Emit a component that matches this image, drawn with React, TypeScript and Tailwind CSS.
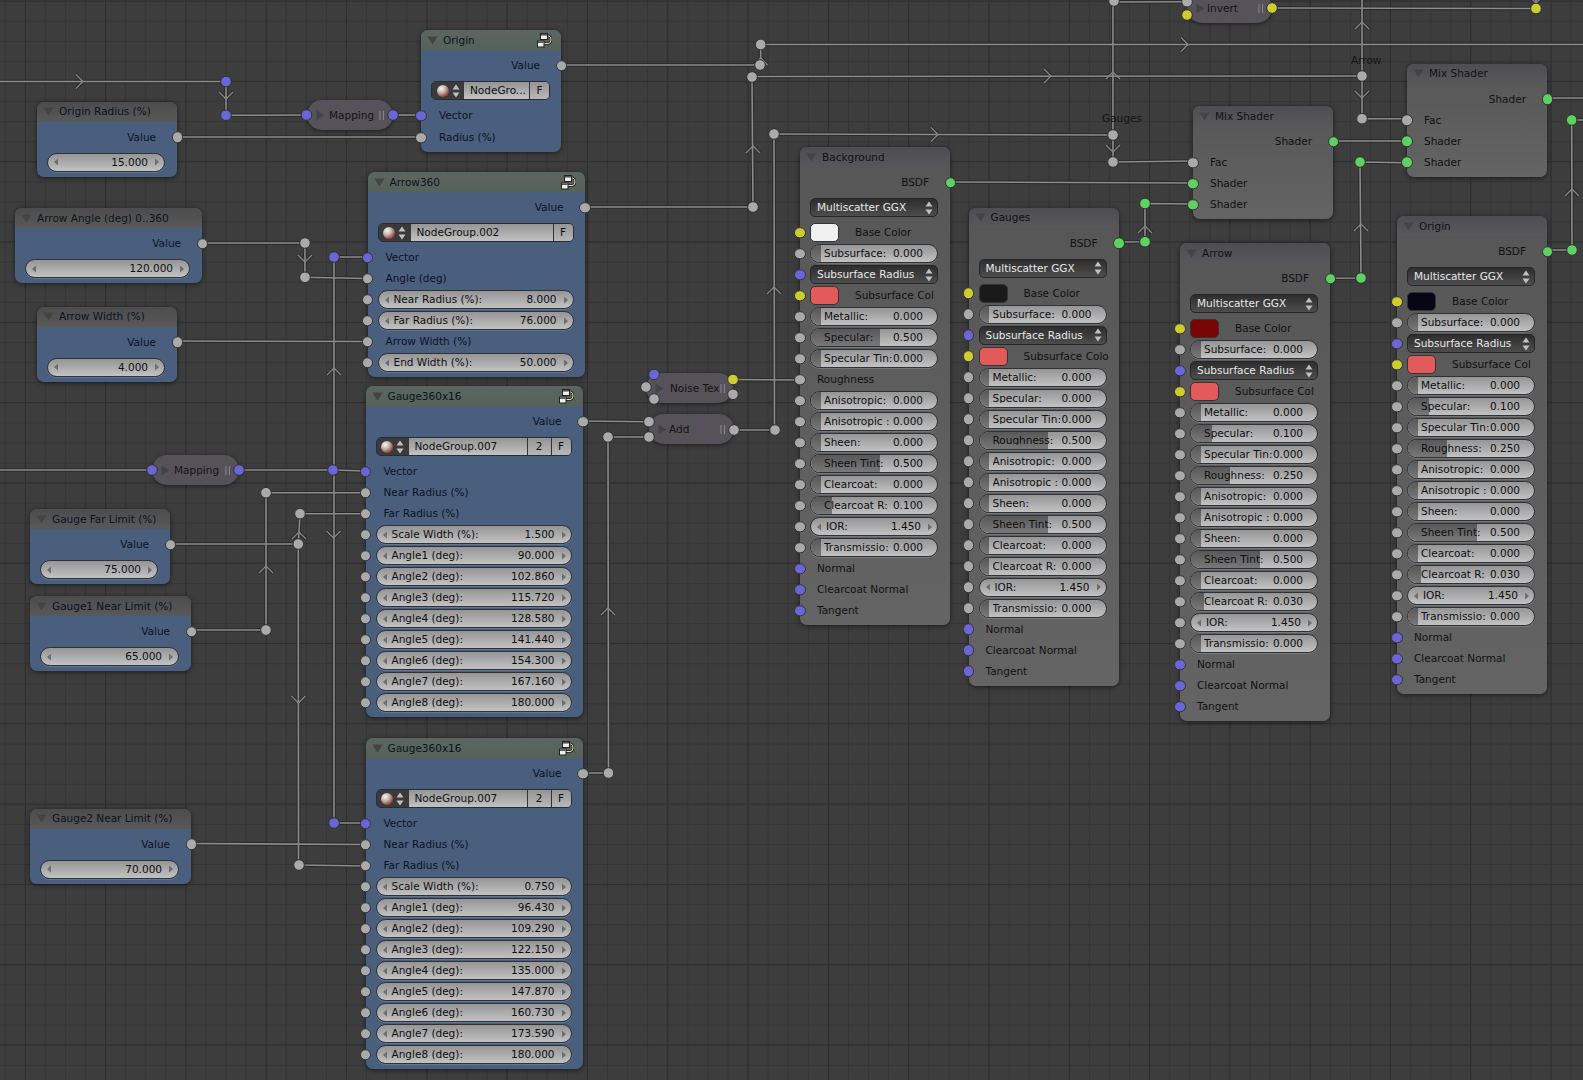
import React from "react";

type Sock = "grey" | "blue" | "yellow" | "green";
const sockClass: Record<Sock, string> = {
  grey: "bg-[#aaaaaa]",
  blue: "bg-[#6a66d8]",
  yellow: "bg-[#cfcc2e]",
  green: "bg-[#5fd062]",
};
const sockFill: Record<Sock, string> = { grey: "#aaaaaa", blue: "#6a66d8", yellow: "#cfcc2e", green: "#5fd062" };

function Socket({ c, side }: { c: Sock; side: "l" | "r" }) {
  return (
    <span
      className={`absolute top-1/2 -translate-y-1/2 size-[11.5px] rounded-full border border-[#333] ${sockClass[c]} ${
        side === "l" ? "left-[-6px]" : "right-[-6px]"
      }`}
    />
  );
}

function Arrow({ dir }: { dir: "l" | "r" }) {
  return (
    <svg width="6" height="8" viewBox="0 0 6 8" className="shrink-0">
      <path d={dir === "l" ? "M5 0.5 L1 4 L5 7.5Z" : "M1 0.5 L5 4 L1 7.5Z"} fill="#6e6e6e" />
    </svg>
  );
}

function UpDown() {
  return (
    <svg width="8" height="14" viewBox="0 0 8 14" className="shrink-0">
      <path d="M4 0.5 L7.5 5.5 L0.5 5.5Z M4 13.5 L7.5 8.5 L0.5 8.5Z" fill="#c0c0c0" />
    </svg>
  );
}

function InRow({ label, c, indent = "pl-[17px]" }: { label: string; c: Sock; indent?: string }) {
  return (
    <div className={`relative h-[21px] flex items-center ${indent}`}>
      <Socket c={c} side="l" />
      <span>{label}</span>
    </div>
  );
}

function OutRow({ label, c }: { label: string; c: Sock }) {
  return (
    <div className="relative h-[21px] mt-[5px] flex items-center justify-end pr-[21px]">
      <span>{label}</span>
      <Socket c={c} side="r" />
    </div>
  );
}

const fieldBase =
  "relative h-[19px] w-full rounded-full border border-[#2d3138] overflow-hidden flex items-center text-[#0e0e0e] bg-gradient-to-b from-[#959595] to-[#c2c2c2] shadow-[0_1px_0_rgba(255,255,255,0.15)]";

function Slider({ label, v, c = "grey" }: { label: string; v: number; c?: Sock }) {
  return (
    <div className="relative h-[21px] flex items-center pl-[10px] pr-[12px]">
      <Socket c={c} side="l" />
      <div className={fieldBase}>
        <div
          className="absolute left-0 top-0 bottom-0 bg-gradient-to-b from-[#585858] to-[#787878]"
          style={{ width: `${9.5 + v * 118}px` }}
        />
        <span className="relative ml-[13px] min-w-0 overflow-hidden whitespace-nowrap flex-1">{label}</span>
        <span className="relative mr-[14px] shrink-0">{v.toFixed(3)}</span>
      </div>
    </div>
  );
}

function NumField({
  label,
  v,
  pad = "pl-[10px] pr-[12px]",
  socket = true,
}: {
  label?: string;
  v: string;
  pad?: string;
  socket?: boolean;
}) {
  return (
    <div className={`relative h-[21px] flex items-center ${pad}`}>
      {socket && <Socket c="grey" side="l" />}
      <div className={fieldBase}>
        <span className="ml-[5px]">
          <Arrow dir="l" />
        </span>
        <span className="ml-[4px] flex-1 whitespace-nowrap">{label}</span>
        <span className="mr-[6px]">{v}</span>
        <span className="mr-[4px]">
          <Arrow dir="r" />
        </span>
      </div>
    </div>
  );
}

function Dropdown({ label, c }: { label: string; c?: Sock }) {
  return (
    <div className="relative h-[21px] flex items-center pl-[10px] pr-[12px]">
      {c && <Socket c={c} side="l" />}
      <div className="h-[19px] w-full rounded-[5px] border border-[#262626] bg-gradient-to-b from-[#2e2e2e] to-[#4d4d4d] flex items-center justify-between pl-[6px] pr-[4px] text-[#e8e8e8] whitespace-nowrap">
        <span>{label}</span>
        <UpDown />
      </div>
    </div>
  );
}

function Swatch({ color, label }: { color: string; label: string }) {
  return (
    <div className="relative h-[21px] flex items-center pl-[10px]">
      <Socket c="yellow" side="l" />
      <span className={`h-[19px] w-[29px] rounded-[5px] border border-[#333] ${color}`} />
      <span className="ml-[16px] whitespace-nowrap">{label}</span>
    </div>
  );
}

function Header({ name, tone, icon }: { name: string; tone: string; icon?: boolean }) {
  return (
    <div className={`h-[20px] flex items-center pl-[6px] pr-[9px] bg-gradient-to-b ${tone}`}>
      <svg width="11" height="9" viewBox="0 0 11 9" className="shrink-0">
        <path d="M0.5 0.5 H10.5 L5.5 8.5Z" fill="#444444" />
      </svg>
      <span className="ml-[5px] flex-1 whitespace-nowrap">{name}</span>
      {icon && <GroupIcon />}
    </div>
  );
}

function GroupIcon() {
  return (
    <svg width="15" height="15" viewBox="0 0 15 15" className="shrink-0">
      <path d="M10 3 H12 Q14 3.5 14 7 Q14 10.5 11 10.5 H6" fill="none" stroke="#222" strokeWidth="2.4" />
      <path d="M10 3 H12 Q14 3.5 14 7 Q14 10.5 11 10.5 H6" fill="none" stroke="#e6e2b8" strokeWidth="1" />
      <rect x="3.5" y="0.5" width="7" height="6" fill="#eee" stroke="#222" />
      <rect x="4" y="1" width="6" height="1.6" fill="#555" />
      <rect x="0.5" y="8" width="6.5" height="6" fill="#eee" stroke="#222" />
      <rect x="1" y="8.5" width="5.5" height="1.5" fill="#555" />
    </svg>
  );
}

const nodeBase = "absolute rounded-[7px] overflow-visible flex flex-col shadow-[0_1px_5px_rgba(0,0,0,0.55)]";
const blueBody = "bg-[#4a5f7e] text-[#0a1322]";
const greyBody = "bg-gradient-to-b from-[#565656] to-[#646464] text-[#111111]";
const headGroup = "from-[#5a6660] to-[#566258] rounded-t-[7px]";
const headVal = "from-[#4c4c4c] to-[#595959] rounded-t-[7px]";
const headShader = "from-[#4e4e52] to-[#58585b] rounded-t-[7px]";

function ValueNode({ pos, name, v }: { pos: string; name: string; v: string }) {
  return (
    <div className={`${nodeBase} ${blueBody} ${pos} pb-[4px]`}>
      <Header name={name} tone={headVal} />
      <OutRow label="Value" c="grey" />
      <div className="mt-[4px]">
        <NumField v={v} socket={false} />
      </div>
    </div>
  );
}

function IdBlock({ name, user }: { name: string; user?: string }) {
  return (
    <div className="relative h-[21px] mt-[4px] mb-[4px] flex items-center pl-[10px] pr-[11px]">
      <div className="h-[19px] w-full rounded-[5px] border border-[#262c36] flex items-stretch overflow-hidden text-[#0e0e0e]">
        <div className="w-[32px] shrink-0 bg-[#3a3a3a] flex items-center justify-center gap-[3px]">
          <span className="size-[12px] rounded-full bg-[radial-gradient(circle_at_35%_30%,#f4f4f4_0%,#c8b8b0_35%,#9a4c44_70%,#4a2a28_100%)]" />
          <UpDown />
        </div>
        <div className="flex-1 min-w-0 px-[6px] flex items-center whitespace-nowrap overflow-hidden bg-gradient-to-b from-[#959595] to-[#c2c2c2]">
          {name}
        </div>
        {user && (
          <div className="w-[24px] shrink-0 border-l border-[#333] flex items-center justify-center bg-gradient-to-b from-[#959595] to-[#b8b8b8]">
            {user}
          </div>
        )}
        <div className="w-[20px] shrink-0 border-l border-[#333] flex items-center justify-center bg-gradient-to-b from-[#959595] to-[#b8b8b8]">
          F
        </div>
      </div>
    </div>
  );
}

const numPad = "pl-[10px] pr-[11px]";

function GaugeNode({
  pos,
  id,
  vals,
}: {
  pos: string;
  id: string;
  vals: [string, string, string, string, string, string, string, string, string];
}) {
  return (
    <div className={`${nodeBase} ${blueBody} ${pos} pb-[4px]`}>
      <Header name="Gauge360x16" tone={headGroup} icon />
      <OutRow label="Value" c="grey" />
      <IdBlock name={id} user="2" />
      <InRow label="Vector" c="blue" indent="pl-[18px]" />
      <InRow label="Near Radius (%)" c="grey" indent="pl-[18px]" />
      <InRow label="Far Radius (%)" c="grey" indent="pl-[18px]" />
      <NumField label="Scale Width (%):" v={vals[0]} pad={numPad} />
      {[1, 2, 3, 4, 5, 6, 7, 8].map((i) => (
        <NumField key={i} label={`Angle${i} (deg):`} v={vals[i]} pad={numPad} />
      ))}
    </div>
  );
}

function Principled({
  pos,
  name,
  color,
  colLabel,
  spec,
  rough,
  ccr,
  bg,
}: {
  pos: string;
  name: string;
  color: string;
  colLabel: string;
  spec: number;
  rough: number;
  ccr: number;
  bg?: boolean;
}) {
  return (
    <div className={`${nodeBase} ${greyBody} ${pos} pb-[4px]`}>
      <Header name={name} tone={headShader} />
      <OutRow label="BSDF" c="green" />
      <div className="mt-[4px] mb-[4px]">
        <Dropdown label="Multiscatter GGX" />
      </div>
      <Swatch color={color} label="Base Color" />
      <Slider label="Subsurface:" v={0} />
      <Dropdown label="Subsurface Radius" c="blue" />
      <Swatch color="bg-[#e25a5a]" label={colLabel} />
      <Slider label="Metallic:" v={0} />
      <Slider label="Specular:" v={spec} />
      <Slider label="Specular Tin:" v={0} />
      {bg ? <InRow label="Roughness" c="grey" /> : <Slider label="Roughness:" v={rough} />}
      <Slider label="Anisotropic:" v={0} />
      <Slider label="Anisotropic :" v={0} />
      <Slider label="Sheen:" v={0} />
      <Slider label="Sheen Tint:" v={0.5} />
      <Slider label="Clearcoat:" v={0} />
      <Slider label="Clearcoat R:" v={ccr} />
      <NumField label="IOR:" v="1.450" />
      <Slider label="Transmissio:" v={0} />
      <InRow label="Normal" c="blue" />
      <InRow label="Clearcoat Normal" c="blue" />
      <InRow label="Tangent" c="blue" />
    </div>
  );
}

function MixShader({ pos }: { pos: string }) {
  return (
    <div className={`${nodeBase} ${greyBody} ${pos} pb-[4px]`}>
      <Header name="Mix Shader" tone={headShader} />
      <OutRow label="Shader" c="green" />
      <InRow label="Fac" c="grey" />
      <InRow label="Shader" c="green" />
      <InRow label="Shader" c="green" />
    </div>
  );
}

function Pill({ pos, name, gap }: { pos: string; name: string; gap: string }) {
  return (
    <div
      className={`absolute h-[30px] rounded-[15px] bg-[#55525a] shadow-[0_1px_4px_rgba(0,0,0,0.5)] flex items-center pl-[9px] pr-[8px] text-[#141414] ${pos}`}
    >
      <svg width="9" height="11" viewBox="0 0 9 11" className="shrink-0">
        <path d="M0.5 0.5 L8.5 5.5 L0.5 10.5Z" fill="#434347" />
      </svg>
      <span className={`flex-1 whitespace-nowrap ${gap}`}>{name}</span>
      <svg width="6" height="9" viewBox="0 0 6 9" className="shrink-0">
        <path d="M1 0 V9 M4.5 0 V9" stroke="#85838a" strokeWidth="1.1" />
      </svg>
    </div>
  );
}

type P = [number, number];
const W: P[][] = [
  [[0, 81.5], [226, 81.5], [226, 115.3], [306.5, 115]],
  [[393, 115], [421, 115]],
  [[177, 137], [421, 137]],
  [[561, 65], [760, 65]],
  [[760.7, 65], [760.7, 44.5], [1583, 44.5]],
  [[1362, 0], [1362, 118.7], [1407, 118.7]],
  [[752, 76.5], [1362, 76]],
  [[752, 77], [753, 207], [584.5, 207]],
  [[1113, 162], [1113, 2], [1187, 1.7]],
  [[774, 134], [1113, 135]],
  [[1113, 162], [1193, 161]],
  [[774, 134], [774.5, 430], [734, 430]],
  [[733, 379.5], [800, 380]],
  [[950, 182], [1193, 183]],
  [[1193, 204], [1145, 203.5], [1145, 241.7], [1118.6, 242]],
  [[1333, 141], [1407, 141]],
  [[1407, 162.7], [1360, 162], [1361, 278], [1330, 278.3]],
  [[1547, 250], [1572, 250], [1571.7, 120], [1583, 120]],
  [[1547, 98], [1583, 98]],
  [[1272, 8], [1536, 8.5], [1536, 0]],
  [[202, 243], [305, 243], [305, 277.3], [367.5, 278.5]],
  [[367.5, 257], [334, 257], [334, 823], [365, 823]],
  [[177, 341], [367.5, 341.5]],
  [[0, 470], [152, 470]],
  [[239, 470], [333, 470], [365, 471]],
  [[365, 492.7], [266, 492.7], [266, 630], [191, 630]],
  [[365, 513.7], [300, 513.7], [298.3, 544], [170, 544]],
  [[298.3, 544], [298.5, 865], [365, 866]],
  [[191, 843.5], [365, 844.5]],
  [[582.5, 421], [649, 421.7]],
  [[649, 437], [608, 437], [608.5, 773], [582.5, 773]],
];

type Chev = [number, number, "u" | "d" | "r"];
const C: Chev[] = [
  [83, 81.5, "r"], [226, 99, "d"], [760.7, 58, "u"], [1188, 44.5, "r"], [1051, 76, "r"], [753, 146, "u"],
  [938, 134.5, "r"], [1113, 152, "d"], [774, 287, "u"], [1145, 226, "u"], [1362, 98, "d"], [1362, 22, "u"],
  [1113, 72, "u"], [1361, 224, "u"], [1572, 189, "u"], [305, 262, "d"], [334, 368, "u"], [333.5, 538, "d"],
  [266, 566, "u"], [299, 532, "u"], [298.4, 703, "d"], [608, 608, "u"], [1536, 3, "d"],
];

function chevPath([x, y, d]: Chev) {
  const a = 7;
  if (d === "r") return `M${x - a} ${y - a} L${x} ${y} L${x - a} ${y + a}`;
  if (d === "u") return `M${x - a} ${y + a} L${x} ${y} L${x + a} ${y + a}`;
  return `M${x - a} ${y - a} L${x} ${y} L${x + a} ${y - a}`;
}

const D: [number, number, Sock][] = [
  [226, 81.5, "blue"], [226, 115.3, "blue"], [306.5, 115, "blue"], [393, 115, "blue"],
  [760.7, 44.5, "grey"], [760, 65, "grey"], [752, 77, "grey"], [774, 134, "grey"], [753, 207, "grey"],
  [1113, 135, "grey"], [1113, 162, "grey"], [1114, 1, "grey"], [1362, 76, "grey"], [1362, 118.7, "grey"],
  [1145, 203.5, "green"], [1145, 241.7, "green"], [1360, 162, "green"], [1361, 278, "green"],
  [1572, 250, "green"], [1571.7, 120, "green"], [1536, 8.5, "yellow"], [305, 243, "grey"], [305, 277.3, "grey"],
  [334, 257, "blue"], [333, 470, "blue"], [334, 823, "blue"], [152, 470, "blue"], [239, 470, "blue"],
  [266, 492.7, "grey"], [266, 630, "grey"], [300, 513.7, "grey"], [298.3, 544, "grey"], [299, 865, "grey"],
  [608, 437, "grey"], [608.5, 773, "grey"], [775, 430, "grey"],
  [654, 374.5, "blue"], [646, 387, "grey"], [654, 399, "grey"], [733, 379.5, "yellow"], [733, 394.3, "grey"],
  [649, 421.7, "grey"], [649, 437, "grey"], [734, 430, "grey"],
  [1187, 1.7, "grey"], [1187, 15, "yellow"], [1272, 8, "yellow"],
];

export default function App() {
  return (
    <div className="relative w-[1583px] h-[1080px] overflow-hidden font-['DejaVu_Sans',sans-serif] text-[10.5px] leading-none bg-[#3d3d3d] bg-[linear-gradient(to_right,#2e2e2e_1px,transparent_1px),linear-gradient(to_bottom,#2e2e2e_1px,transparent_1px),linear-gradient(to_right,#353535_1px,transparent_1px),linear-gradient(to_bottom,#353535_1px,transparent_1px)] bg-[size:80.3px_80.3px,80.3px_80.3px,20.08px_20.08px,20.08px_20.08px] bg-[position:24.9px_0,0_0.6px,4.7px_0,0_0.7px]">
      <svg className="absolute left-0 top-0" width="1583" height="1080" viewBox="0 0 1583 1080" fill="none">
        {W.map((p, i) => (
          <path key={i} d={"M" + p.map((q) => q.join(" ")).join(" L")} stroke="#2a2a2a" strokeWidth="3.6" />
        ))}
        {C.map((c, i) => (
          <path key={i} d={chevPath(c)} stroke="#2a2a2a" strokeWidth="3.2" />
        ))}
        {W.map((p, i) => (
          <path key={i} d={"M" + p.map((q) => q.join(" ")).join(" L")} stroke="#8c8c8c" strokeWidth="1.6" />
        ))}
        {C.map((c, i) => (
          <path key={i} d={chevPath(c)} stroke="#868686" strokeWidth="1.4" />
        ))}
      </svg>

      <span className="absolute left-[1102px] top-[113px] text-[#141414]">Gauges</span>
      <span className="absolute left-[1351px] top-[55px] text-[#141414]">Arrow</span>

      <ValueNode pos="left-[37px] top-[101.5px] w-[140px]" name="Origin Radius (%)" v="15.000" />
      <ValueNode pos="left-[15px] top-[208px] w-[187px]" name="Arrow Angle (deg) 0..360" v="120.000" />
      <ValueNode pos="left-[37px] top-[306.5px] w-[140px]" name="Arrow Width (%)" v="4.000" />
      <ValueNode pos="left-[30px] top-[509px] w-[140px]" name="Gauge Far Limit (%)" v="75.000" />
      <ValueNode pos="left-[30px] top-[596px] w-[161px]" name="Gauge1 Near Limit (%)" v="65.000" />
      <ValueNode pos="left-[30px] top-[808.5px] w-[161px]" name="Gauge2 Near Limit (%)" v="70.000" />

      <div className={`${nodeBase} ${blueBody} left-[421px] top-[30px] w-[140px] pb-[4px]`}>
        <Header name="Origin" tone={headGroup} icon />
        <OutRow label="Value" c="grey" />
        <IdBlock name="NodeGro..." />
        <InRow label="Vector" c="blue" indent="pl-[18px]" />
        <div className="pt-[1px]">
          <InRow label="Radius (%)" c="grey" indent="pl-[18px]" />
        </div>
      </div>

      <div className={`${nodeBase} ${blueBody} left-[367.5px] top-[172px] w-[217px] pb-[4px]`}>
        <Header name="Arrow360" tone={headGroup} icon />
        <OutRow label="Value" c="grey" />
        <IdBlock name="NodeGroup.002" />
        <InRow label="Vector" c="blue" indent="pl-[18px]" />
        <InRow label="Angle (deg)" c="grey" indent="pl-[18px]" />
        <NumField label="Near Radius (%):" v="8.000" pad={numPad} />
        <NumField label="Far Radius (%):" v="76.000" pad={numPad} />
        <InRow label="Arrow Width (%)" c="grey" indent="pl-[18px]" />
        <NumField label="End Width (%):" v="50.000" pad={numPad} />
      </div>

      <GaugeNode
        pos="left-[365.5px] top-[386px] w-[217px]"
        id="NodeGroup.007"
        vals={["1.500", "90.000", "102.860", "115.720", "128.580", "141.440", "154.300", "167.160", "180.000"]}
      />
      <GaugeNode
        pos="left-[365.5px] top-[738px] w-[217px]"
        id="NodeGroup.007"
        vals={["0.750", "96.430", "109.290", "122.150", "135.000", "147.870", "160.730", "173.590", "180.000"]}
      />

      <Pill pos="left-[307px] top-[100px] w-[86px]" name="Mapping" gap="ml-[4px]" />
      <Pill pos="left-[152px] top-[455px] w-[87px]" name="Mapping" gap="ml-[4px]" />
      <Pill pos="left-[646px] top-[373px] w-[87px]" name="Noise Tex" gap="ml-[6px]" />
      <Pill pos="left-[649px] top-[414px] w-[85px]" name="Add" gap="ml-[2px]" />
      <Pill pos="left-[1187px] top-[-7px] w-[85px]" name="Invert" gap="ml-[2px]" />

      <Principled pos="left-[800px] top-[147px] w-[150px]" name="Background" color="bg-[#f0f0f0]" colLabel="Subsurface Col" spec={0.5} rough={0} ccr={0.1} bg />
      <Principled pos="left-[968.5px] top-[207.5px] w-[150px]" name="Gauges" color="bg-[#1a1a1a]" colLabel="Subsurface Colo" spec={0} rough={0.5} ccr={0} />
      <Principled pos="left-[1180px] top-[243px] w-[150px]" name="Arrow" color="bg-[#7a0505]" colLabel="Subsurface Col" spec={0.1} rough={0.25} ccr={0.03} />
      <Principled pos="left-[1397px] top-[216px] w-[150px]" name="Origin" color="bg-[#060614]" colLabel="Subsurface Col" spec={0.1} rough={0.25} ccr={0.03} />

      <MixShader pos="left-[1193px] top-[106px] w-[140px]" />
      <MixShader pos="left-[1407px] top-[63.5px] w-[140px]" />

      <svg className="absolute left-0 top-0" width="1583" height="1080" viewBox="0 0 1583 1080">
        {D.map(([x, y, c], i) => (
          <circle key={i} cx={x} cy={y} r="5.3" fill={sockFill[c]} stroke="#333" strokeWidth="1" />
        ))}
      </svg>
    </div>
  );
}
